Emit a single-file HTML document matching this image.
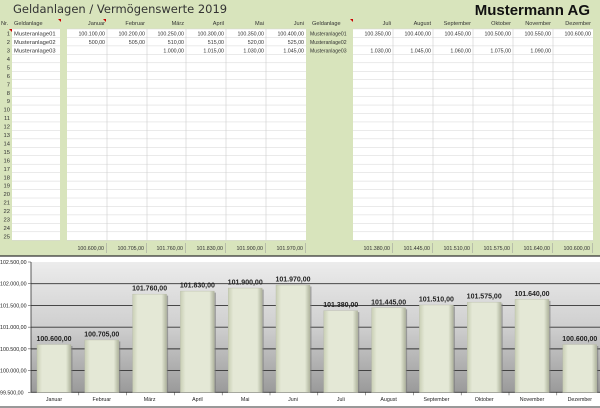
<!DOCTYPE html>
<html><head><meta charset="utf-8"><style>
html,body{margin:0;padding:0;width:600px;height:408px;overflow:hidden;background:#fff}
svg{display:block;font-family:"Liberation Sans",sans-serif}
</style></head><body>
<svg id="s" width="600" height="408" viewBox="0 0 600 408" xmlns="http://www.w3.org/2000/svg">
<defs>
<linearGradient id="bg" x1="0" y1="0" x2="0" y2="1">
<stop offset="0" stop-color="#ececec"/><stop offset="0.5" stop-color="#cfcfcf"/><stop offset="1" stop-color="#9a9a9a"/></linearGradient>
<linearGradient id="bar" x1="0" y1="0" x2="1" y2="0">
<stop offset="0" stop-color="#c9cfb5"/><stop offset="0.15" stop-color="#e4e8d6"/><stop offset="0.85" stop-color="#e4e8d6"/><stop offset="1" stop-color="#aeb39c"/></linearGradient>
</defs>
<rect x="0" y="0" width="600" height="256" fill="#d8e4bc"/>
<text x="13" y="13" font-size="11.5" fill="#333" font-family="DejaVu Sans, sans-serif">Geldanlagen / Vermögenswerte 2019</text>
<text x="590" y="15" font-size="15" font-weight="bold" text-anchor="end" fill="#111">Mustermann AG</text>
<g id="g"></g>
</svg>
<script>
var g=document.getElementById('g'),h='';
function T(x,y,t,a,fs,c,b){h+='<text x="'+x+'" y="'+y+'" font-size="'+(fs||5.6)+'" text-anchor="'+(a||'start')+'" fill="'+(c||'#333')+'"'+(b?' font-weight="bold"':'')+'>'+t+'</text>';}
function R(x,y,w,hh,f,extra){h+='<rect x="'+x+'" y="'+y+'" width="'+w+'" height="'+hh+'" fill="'+f+'" '+(extra||'')+'/>';}
function L(x1,y1,x2,y2,c,w){h+='<line x1="'+x1+'" y1="'+y1+'" x2="'+x2+'" y2="'+y2+'" stroke="'+c+'" stroke-width="'+(w||0.5)+'"/>';}
var top0=29,rh=8.45,bot=top0+25*rh;
var cols=[67,107,147,186,226,266,306],cols2=[353,393,433,473,513,553,593];
R(12,top0,48,25*rh,'#fff');R(67,top0,239,25*rh,'#fff');R(353,top0,240,25*rh,'#fff');
for(var i=0;i<=25;i++){var y=top0+i*rh;L(12,y,60,y,'#d6d6d6');L(67,y,306,y,'#d6d6d6');L(353,y,593,y,'#d6d6d6');}
cols.slice(1,6).forEach(function(x){L(x,top0,x,bot,'#c4c4c4');});
cols2.slice(1,6).forEach(function(x){L(x,top0,x,bot,'#c4c4c4');});
T(1,25,'Nr.');T(14,25,'Geldanlage');T(312,25,'Geldanlage');
h+='<path d="M58 19l3 0 0 3z" fill="#c00"/><path d="M103 19l3 0 0 3z" fill="#c00"/><path d="M350 19l3 0 0 3z" fill="#c00"/><path d="M9 29l3 0 0 3z" fill="#c00"/>';
var m=['Januar','Februar','März','April','Mai','Juni','Juli','August','September','Oktober','November','Dezember'];
function rx(k){return (k<6?cols[k+1]:cols2[k-5])-2;}
m.forEach(function(n,k){T(rx(k),25,n,'end');});
for(var i=0;i<25;i++){T(10,top0+i*rh+6.6,(i+1),'end',5.8);}
['Musteranlage01','Musteranlage02','Musteranlage03'].forEach(function(n,i){T(14,top0+i*rh+6.6,n,'start',5.8);T(310,top0+i*rh+6.6,n,'start',5.1);});
var d=[['100.100,00','100.200,00','100.250,00','100.300,00','100.350,00','100.400,00','100.350,00','100.400,00','100.450,00','100.500,00','100.550,00','100.600,00'],
['500,00','505,00','510,00','515,00','520,00','525,00','','','','','',''],
['','','1.000,00','1.015,00','1.030,00','1.045,00','1.030,00','1.045,00','1.060,00','1.075,00','1.090,00','']];
d.forEach(function(r,i){r.forEach(function(v,k){if(v)T(rx(k),top0+i*rh+6.6,v,'end',5.3);});});
var tot=[100600,100705,101760,101830,101900,101970,101380,101445,101510,101575,101640,100600];
function f(v){var s=String(v);var n=s.length;return s.slice(0,n-3)+'.'+s.slice(n-3)+',00';}
tot.forEach(function(v,k){T(rx(k)-1,250,f(v),'end',5.3);L(rx(k)+1.5,243,rx(k)+1.5,253,'#999');});
L(0,256,600,256,'#333',1.2);
var px=31,py=262,pb=392.3,sc=(pb-py)/3000;
R(px,py,569,pb-py,'url(#bg)');
for(var j=0;j<=6;j++){var v=99500+j*500,y=pb-j*500*sc;if(j>0&&j<6)L(px,y,600,y,'#333',0.9);
T(0,y+2,f(v),'start',5.3,'#222');L(px-3,y,px,y,'#333');}
L(px,py,px,pb,'#333',0.8);L(px,pb,600,pb,'#333',0.8);
var cw=47.8;
tot.forEach(function(v,k){var x=37+k*cw,y=pb-(v-99500)*sc;
R(x+1.5,y+1.5,34,pb-y-1.5,'#777','opacity="0.6"');
R(x,y,34,pb-y,'url(#bar)','stroke="#b8bca8" stroke-width="0.4"');
T(x+17,y-3.5,f(v),'middle',7,'#222',true);
T(x+17,401,m[k],'middle',5.3,'#222');L(px+(k+1)*cw,pb,px+(k+1)*cw,pb+3,'#333');});
L(0,407,600,407,'#333',1);
g.innerHTML=h;
</script>
</body></html>
